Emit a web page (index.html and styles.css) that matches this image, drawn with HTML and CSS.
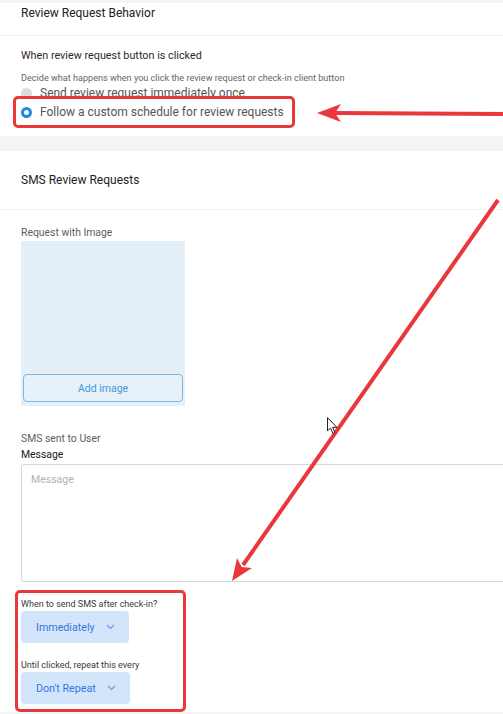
FILE: index.html
```html
<!DOCTYPE html>
<html lang="en">
<head>
    <meta charset="UTF-8">
    <meta name="viewport" content="width=device-width, initial-scale=1.0">
    <title>Review Settings</title>
    <link rel="stylesheet" href="styles.css">
</head>
<body>
    <div class="page">
        <!-- Review request behaviour -->
        <div class="card">
            <div class="card-head">Review Request Behavior</div>
            <div class="card-body behavior">
                <div class="field-title">When review request button is clicked</div>
                <div class="field-hint">Decide what happens when you click the review request or check-in client button</div>
                <div class="radio-row">
                    <span class="radio"></span>
                    <span>Send review request immediately once</span>
                </div>
                <div class="radio-row marked">
                    <span class="radio checked"></span>
                    <span>Follow a custom schedule for review requests</span>
                </div>
            </div>
        </div>

        <!-- SMS review requests -->
        <div class="card">
            <div class="card-head tall">SMS Review Requests</div>
            <div class="card-body sms">
                <div class="label">Request with Image</div>
                <div class="image-box">
                    <button class="add-image">Add image</button>
                </div>

                <div class="label gap">SMS sent to User</div>
                <div class="label strong">Message</div>
                <textarea class="message" placeholder="Message"></textarea>

                <div class="schedule">
                    <div class="small-label">When to send SMS after check-in?</div>
                    <div class="dropdown">
                        <span>Immediately</span>
                        <svg width="9" height="6" viewBox="0 0 9 6"><path d="M1 1l3.5 3.5L8 1" fill="none" stroke="#6c9ce6" stroke-width="1.2"/></svg>
                    </div>
                    <div class="small-label second">Until clicked, repeat this every</div>
                    <div class="dropdown">
                        <span>Don't Repeat</span>
                        <svg width="9" height="6" viewBox="0 0 9 6"><path d="M1 1l3.5 3.5L8 1" fill="none" stroke="#6c9ce6" stroke-width="1.2"/></svg>
                    </div>
                </div>
            </div>
        </div>
    </div>

    <!-- annotation arrows and pointer drawn over the page -->
    <svg class="overlay" width="503" height="714" viewBox="0 0 503 714">
        <line x1="503" y1="114" x2="334" y2="113" stroke="#e8383b" stroke-width="4"/>
        <polygon points="317,113 341,104 335,113 341,122" fill="#e8383b"/>
        <line x1="498" y1="200" x2="243" y2="565" stroke="#e8383b" stroke-width="4"/>
        <polygon points="232,581 237,558 241.7,567 252,568" fill="#e8383b"/>
        <polygon points="327.5,417.5 327.5,431 330.5,428 333,433.5 335,432.6 332.6,427.3 336.8,427.3" fill="#fff" stroke="#222" stroke-width="1"/>
    </svg>
</body>
</html>
```

FILE: styles.css
```css
body {
    margin: 0;
    background-color: #f2f5f8;
    font-family: Roboto, "Liberation Sans", sans-serif;
    color: #333;
    overflow: hidden;
    height: 714px;
    position: relative;
}

.page {
    width: 640px;
    padding-top: 3px;
}

.card {
    background-color: #fff;
    margin-bottom: 15px;
}

.card-head {
    height: 32px;
    line-height: 20px;
    padding: 0 21px;
    font-size: 12px;
    color: #222;
    border-bottom: 1px solid #eef1f4;
}

.card-head.tall {
    height: 20px;
    padding: 19px 21px;
}

.card-body {
    padding: 12px 21px 8px;
}

.field-title {
    font-size: 10.8px;
    line-height: 16px;
    color: #2a2a2a;
}

.field-hint {
    font-size: 9.1px;
    line-height: 12px;
    color: #666;
    margin-top: 8px;
}

.radio-row {
    display: flex;
    align-items: center;
    gap: 8px;
    font-size: 12px;
    line-height: 16px;
    margin-top: 1px;
    color: #555;
}

.radio {
    width: 11px;
    height: 11px;
    border-radius: 50%;
    background-color: #dcdcdc;
    box-sizing: border-box;
}

.radio.checked {
    background-color: #fff;
    border: 3.5px solid #1e88e5;
}

.radio-row.marked {
    display: inline-flex;
    position: relative;
    margin: -5px 0 0 -8px;
    height: 26px;
    padding: 0 8px 0 5px;
    border: 3px solid #e8383b;
    border-radius: 5px;
    background-color: #fff;
}

.card-body.sms {
    padding: 15px 21px 0;
}

.label {
    font-size: 10.4px;
    line-height: 16px;
    color: #5a5e63;
}

.label.gap {
    margin-top: 25px;
}

.label.strong {
    color: #15181c;
}

.image-box {
    width: 164px;
    height: 165px;
    background-color: #e4eff7;
    display: flex;
    flex-direction: column;
    justify-content: flex-end;
    padding: 0 2px 4px;
    box-sizing: border-box;
}

.add-image {
    height: 28px;
    border: 1px solid #7cb7e4;
    border-radius: 4px;
    background-color: #e6f1f9;
    color: #4596df;
    font-family: Roboto, "Liberation Sans", sans-serif;
    font-size: 10.5px;
}

.message {
    display: block;
    width: 520px;
    height: 118px;
    margin-top: 1px;
    padding: 8px 9px;
    border: 1px solid #d3d7de;
    border-radius: 3px;
    box-sizing: border-box;
    font-family: Roboto, "Liberation Sans", sans-serif;
    font-size: 10.5px;
    resize: none;
}

.message::placeholder {
    color: #b0b3b8;
}

.schedule {
    position: relative;
    width: 171px;
    margin: 8px 0 -8px -6px;
    padding: 5px 3px 5px;
    border: 3px solid #e8383b;
    border-radius: 5px;
    background-color: #fff;
    box-sizing: border-box;
}

.small-label {
    font-size: 9px;
    line-height: 12px;
    color: #3a3a3a;
    margin-bottom: 1px;
}

.small-label.second {
    margin-top: 16px;
}

.dropdown {
    display: inline-flex;
    align-items: center;
    gap: 11px;
    height: 32px;
    padding: 0 14px 0 15px;
    border-radius: 4px;
    background-color: #d2e5fb;
    color: #3676e0;
    font-size: 10.7px;
}

.overlay {
    position: absolute;
    top: 0;
    left: 0;
    pointer-events: none;
}
```
